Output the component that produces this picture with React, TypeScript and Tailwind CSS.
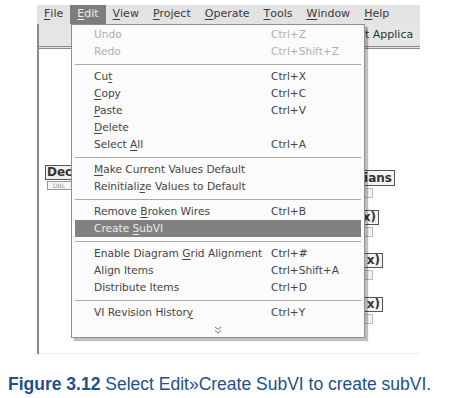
import React from 'react';

type Item =
  | { sep: true }
  | { label: React.ReactNode; key?: string; disabled?: boolean; active?: boolean; sep?: false };

const U = ({ children }: { children: React.ReactNode }) => <span className="underline underline-offset-2">{children}</span>;

const items: Item[] = [
  { label: 'Undo', key: 'Ctrl+Z', disabled: true },
  { label: 'Redo', key: 'Ctrl+Shift+Z', disabled: true },
  { sep: true },
  { label: <>Cu<U>t</U></>, key: 'Ctrl+X' },
  { label: <><U>C</U>opy</>, key: 'Ctrl+C' },
  { label: <><U>P</U>aste</>, key: 'Ctrl+V' },
  { label: <><U>D</U>elete</> },
  { label: <>Select <U>A</U>ll</>, key: 'Ctrl+A' },
  { sep: true },
  { label: <><U>M</U>ake Current Values Default</> },
  { label: <>Reinitiali<U>z</U>e Values to Default</> },
  { sep: true },
  { label: <>Remove <U>B</U>roken Wires</>, key: 'Ctrl+B' },
  { label: <>Create <U>S</U>ubVI</>, active: true },
  { sep: true },
  { label: <>Enable Diagram <U>G</U>rid Alignment</>, key: 'Ctrl+#' },
  { label: 'Align Items', key: 'Ctrl+Shift+A' },
  { label: 'Distribute Items', key: 'Ctrl+D' },
  { sep: true },
  { label: <>VI Revision Histor<U>y</U></>, key: 'Ctrl+Y' },
];

const menus = ['File', 'Edit', 'View', 'Project', 'Operate', 'Tools', 'Window', 'Help'];

export default function App() {
  return (
    <div className="relative w-[460px] h-[398px] bg-white overflow-hidden" style={{ fontFamily: '"DejaVu Sans", Verdana, sans-serif' }}>
      {/* window behind the menu */}
      <div className="ml-[37px] mt-[5px] w-[383px] h-[349px] flex flex-col">
        <div className="h-[19px] flex items-center bg-[#e3e3e3] text-[11px] text-[#3a3a3a]">
          {menus.map((m) => (
            <div
              key={m}
              className={`h-full flex items-center px-[7px] ${m === 'Edit' ? 'bg-[#7d7d7d] text-[#eeeeee]' : ''}`}
            >
              <U>{m[0]}</U>
              {m.slice(1)}
            </div>
          ))}
        </div>
        <div className="flex-1 flex flex-col border-l-2 border-[#8a8a8a]">
          <div className="h-[25px] bg-[#e6e6e6] border-b-[3px] border-double border-[#8c8c8c] flex justify-end items-start">
            <span className="text-[11px] text-[#333] pt-[3px] w-[55px] whitespace-nowrap">t Applica</span>
          </div>
          <div className="flex-1 border-b border-[#ececec]"></div>
        </div>
      </div>

      {/* front panel objects */}
      <div className="absolute left-[45px] top-[165px] w-[32px] h-[15px] border border-[#555] bg-[#f0f0f0] text-[12px] font-bold leading-[13px] pl-[1px] text-[#333]">
        Dec
      </div>
      <div className="absolute left-[47px] top-[181px] w-[28px] h-[9px] border border-[#999] bg-[#f4f4f4] text-[6px] leading-[7px] pl-[5px] text-[#999]">
        DBL
      </div>
      <div className="absolute left-[340px] top-[170px] w-[55px] h-[16px] border border-[#555] bg-[#f5f5f5] text-[12px] font-bold leading-[14px] text-right pr-[2px] text-[#333]">
        ians
      </div>
      <div className="absolute left-[355px] top-[188px] w-[18px] h-[10px] border border-[#bbb] bg-[#f2f2f2]"></div>
      {[210, 253, 297].map((t, i) => (
        <React.Fragment key={t}>
          <div
            className="absolute left-[340px] h-[15px] border border-[#555] bg-[#f5f5f5] text-[12px] font-bold leading-[13px] text-right pr-[2px] text-[#333]"
            style={{ top: t, width: i === 0 ? 39 : 43 }}
          >
            x)
          </div>
          <div className="absolute left-[355px] w-[18px] h-[10px] border border-[#bbb] bg-[#f2f2f2]" style={{ top: t + 17 }}></div>
        </React.Fragment>
      ))}

      {/* Edit dropdown */}
      <div className="absolute left-[71px] top-[24px] w-[294px] h-[314px] bg-[#fbfbfb] border border-[#8e8e8e] shadow-[3px_3px_1px_rgba(0,0,0,0.25)] pt-[1px] text-[10.6px] text-[#444]">
        {items.map((it, i) =>
          it.sep ? (
            <div key={i} className="h-[8px] flex items-center px-[3px]">
              <div className="w-full h-[1px] bg-[#a8a8a8]"></div>
            </div>
          ) : (
            <div
              key={i}
              className={`h-[17px] mx-[3px] flex items-center pl-[19px] whitespace-nowrap ${
                it.active ? 'bg-[#808080] text-[#ececec]' : it.disabled ? 'text-[#b0b0b0]' : ''
              }`}
            >
              <span className="w-[177px]">{it.label}</span>
              <span>{it.key}</span>
            </div>
          )
        )}
        <div className="h-[17px] flex items-center justify-center text-[#777]">
          <svg width="8" height="8" viewBox="0 0 8 8" fill="none" stroke="#777" strokeWidth="1">
            <path d="M1 1 L4 3.5 L7 1 M1 4.5 L4 7 L7 4.5" />
          </svg>
        </div>
      </div>

      {/* caption */}
      <div
        className="absolute left-[8px] top-[371px] text-[17.5px] text-[#20508f] whitespace-nowrap"
        style={{ fontFamily: '"Liberation Sans", Arial, sans-serif' }}
      >
        <b>Figure 3.12</b> Select Edit»Create SubVI to create subVI.
      </div>
    </div>
  );
}
